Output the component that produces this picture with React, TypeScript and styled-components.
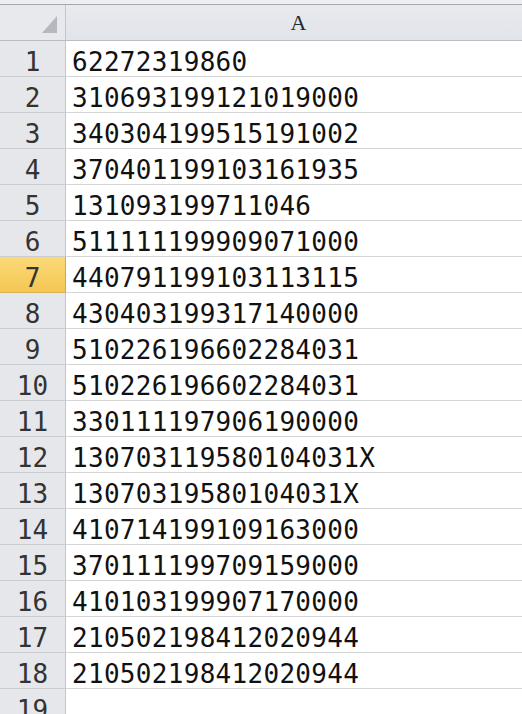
import React from "react";
import styled, { createGlobalStyle } from "styled-components";

const Global = createGlobalStyle`
  html, body { margin: 0; padding: 0; background: #ffffff; }
  #root { width: 522px; height: 714px; overflow: hidden; }
`;

const Sheet = styled.div`
  width: 522px;
  height: 714px;
  overflow: hidden;
  background: #ffffff;
  display: flex;
  flex-direction: column;
`;

const TopStrip = styled.div`
  height: 4px;
  flex: none;
  background: #eceef1;
  border-bottom: 1px solid #a4a8ae;
`;

const Row = styled.div`
  display: grid;
  grid-template-columns: 66px 1fr;
  height: 36px;
  flex: none;
`;

const HeaderRow = styled(Row)`
  background: #e4e7ec;
`;

const Corner = styled.div`
  position: relative;
  border-right: 1px solid #c2c5cb;
  border-bottom: 1px solid #b8bcc3;
  background: #e7e9ed;
`;

const CornerTriangle = styled.div`
  position: absolute;
  right: 8px;
  bottom: 7px;
  width: 0;
  height: 0;
  border-left: 15px solid transparent;
  border-bottom: 17px solid #b5b9bf;
`;

const ColHeader = styled.div`
  border-bottom: 1px solid #b8bcc3;
  background: linear-gradient(#e8eaee, #e1e4e9);
  display: flex;
  align-items: center;
  justify-content: center;
  padding-left: 9px;
  font-family: "Liberation Serif", "DejaVu Serif", serif;
  font-size: 22px;
  color: #2a2a2a;
`;

const RowHeader = styled.div<{ $active?: boolean }>`
  border-right: 1px solid ${(p) => (p.$active ? "#d7a93a" : "#c2c5cb")};
  border-bottom: 1px solid ${(p) => (p.$active ? "#d9b558" : "#c9ccd1")};
  background: ${(p) =>
    p.$active ? "linear-gradient(#fbd978, #f4c653)" : "#e5e7eb"};
  display: flex;
  align-items: flex-end;
  justify-content: center;
  padding-bottom: 0;
  box-sizing: border-box;
  font-family: "DejaVu Sans Mono", "Liberation Mono", monospace;
  font-size: 26px;
  line-height: 28px;
  color: #333333;
`;

const Cell = styled.div`
  border-bottom: 1px solid #d6d6d6;
  display: flex;
  align-items: flex-end;
  padding-left: 6px;
  padding-bottom: 0;
  box-sizing: border-box;
  font-family: "DejaVu Sans Mono", "Liberation Mono", monospace;
  font-size: 26px;
  line-height: 28px;
  letter-spacing: 0.3px;
  color: #111111;
  white-space: nowrap;
`;

const values = [
  "62272319860",
  "310693199121019000",
  "340304199515191002",
  "370401199103161935",
  "131093199711046",
  "511111199909071000",
  "440791199103113115",
  "430403199317140000",
  "510226196602284031",
  "510226196602284031",
  "330111197906190000",
  "130703119580104031X",
  "13070319580104031X",
  "410714199109163000",
  "370111199709159000",
  "410103199907170000",
  "210502198412020944",
  "210502198412020944",
  "",
];

export default function App() {
  return (
    <Sheet>
      <Global />
      <TopStrip />
      <HeaderRow>
        <Corner>
          <CornerTriangle />
        </Corner>
        <ColHeader>A</ColHeader>
      </HeaderRow>
      {values.map((v, i) => (
        <Row key={i}>
          <RowHeader $active={i === 6}>{i + 1}</RowHeader>
          <Cell>{v}</Cell>
        </Row>
      ))}
    </Sheet>
  );
}
